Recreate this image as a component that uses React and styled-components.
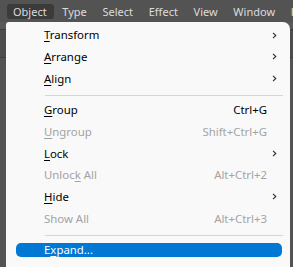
import React from "react";
import styled, { createGlobalStyle } from "styled-components";

const Global = createGlobalStyle`
  html, body {
    margin: 0;
    padding: 0;
    width: 293px;
    height: 267px;
    overflow: hidden;
    background: #535353;
  }
  * { box-sizing: border-box; }
`;

const Screen = styled.div`
  position: relative;
  width: 293px;
  height: 267px;
  overflow: hidden;
  background: #535353;
  font-family: "Noto Sans", "Open Sans", sans-serif;
`;

const MenuBar = styled.div`
  display: flex;
  align-items: center;
  height: 22px;
  padding: 4px 0 3px 7px;
  white-space: nowrap;
`;

const BarItem = styled.div`
  height: 15px;
  display: flex;
  align-items: center;
  padding: 0 7px 0 6px;
  margin-right: 2.7px;
  border-radius: 3px;
  font-size: 11px;
  color: #dcdcdc;
  background: ${(p) => (p.$active ? "#3b3b3b" : "transparent")};
`;

const Workspace = styled.div`
  display: flex;
  flex-direction: column;
  height: 245px;
`;

const CanvasBand = styled.div`
  height: ${(p) => p.$h}px;
  background: ${(p) => p.$bg};
  border-bottom: ${(p) => (p.$line ? "1px solid #3e3e3e" : "none")};
`;

const Dropdown = styled.div`
  position: absolute;
  left: 6px;
  top: 22px;
  width: 284px;
  height: 260px;
  background: #f9f9f9;
  border-radius: 3px 7px 0 0;
  padding-top: 2.5px;
  display: flex;
  flex-direction: column;
  font-family: "Noto Sans", "Open Sans", sans-serif;
  font-size: 11.4px;
`;

const Row = styled.div`
  height: 21.67px;
  display: flex;
  align-items: center;
  padding: 0 8px 0 10px;
`;

const Item = styled.div`
  flex: 1;
  height: 14px;
  display: flex;
  align-items: center;
  border-radius: 5px;
  padding: 0 5px 0 28px;
  background: ${(p) => (p.$hot ? "#0078d4" : "transparent")};
  color: ${(p) => (p.$hot ? "#ffffff" : p.$disabled ? "#a3a3a3" : "#000000")};
  line-height: 14px;
  white-space: nowrap;
`;

const Label = styled.span`
  flex: 1;
  u {
    text-decoration: underline;
    text-decoration-thickness: 1px;
    text-underline-offset: 2px;
  }
`;

const Shortcut = styled.span`
  margin-right: 10px;
`;

const Chevron = styled.svg`
  width: 5px;
  height: 7px;
  display: block;
`;

const Separator = styled.div`
  height: 10px;
  padding: 5.5px 7px 0 39px;
  &::after {
    content: "";
    display: block;
    height: 1px;
    background: #d6d6d6;
  }
`;

const Arrow = () => (
  <Chevron viewBox="0 0 5 7">
    <path d="M1 0.8 L3.8 3.5 L1 6.2" fill="none" stroke="#2b2b2b" strokeWidth="1.1" />
  </Chevron>
);

const mk = (text, idx) =>
  idx < 0 ? (
    text
  ) : (
    <>
      {text.slice(0, idx)}
      <u>{text[idx]}</u>
      {text.slice(idx + 1)}
    </>
  );

const items = [
  { t: "Transform", u: 0, sub: true },
  { t: "Arrange", u: 0, sub: true },
  { t: "Align", u: 0, sub: true },
  { sep: true },
  { t: "Group", u: 0, k: "Ctrl+G" },
  { t: "Ungroup", u: 0, k: "Shift+Ctrl+G", dis: true },
  { t: "Lock", u: 0, sub: true },
  { t: "Unlock All", u: 5, k: "Alt+Ctrl+2", dis: true },
  { t: "Hide", u: 0, sub: true },
  { t: "Show All", u: -1, k: "Alt+Ctrl+3", dis: true },
  { sep: true },
  { t: "Expand...", u: 1, hot: true },
];

const bar = ["Object", "Type", "Select", "Effect", "View", "Window", "Help"];

export default function App() {
  return (
    <>
      <Global />
      <Screen>
        <MenuBar>
          {bar.map((b, i) => (
            <BarItem key={b} $active={i === 0}>
              {b}
            </BarItem>
          ))}
        </MenuBar>
        <Workspace>
          <CanvasBand $h={8} $bg="#595959" $line />
          <CanvasBand $h={28} $bg="#4d4d4d" $line />
          <CanvasBand $h={207} $bg="#535353" />
        </Workspace>
        <Dropdown>
          {items.map((it, i) =>
            it.sep ? (
              <Separator key={i} />
            ) : (
              <Row key={i}>
                <Item $hot={it.hot} $disabled={it.dis}>
                  <Label>{mk(it.t, it.u)}</Label>
                  {it.k && <Shortcut>{it.k}</Shortcut>}
                  {it.sub && <Arrow />}
                </Item>
              </Row>
            )
          )}
        </Dropdown>
      </Screen>
    </>
  );
}
